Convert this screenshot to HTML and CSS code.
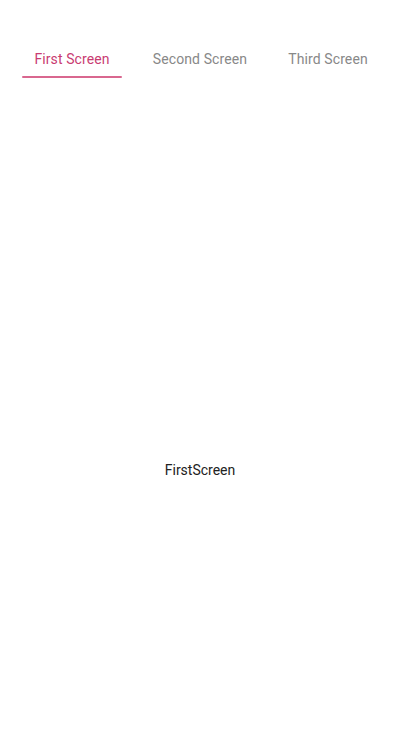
FILE: index.html
```html
<!DOCTYPE html>
<html>
<head>
<meta charset="utf-8">
<link rel="stylesheet" href="styles.css">
</head>
<body>
<div class="app">
  <div class="tabs">
    <div class="tab active"><span class="label">First Screen<span class="indicator"></span></span></div>
    <div class="tab"><span class="label">Second Screen</span></div>
    <div class="tab"><span class="label">Third Screen</span></div>
  </div>
  <div class="content">
    <div class="screen-text">FirstScreen</div>
  </div>
</div>
</body>
</html>
```
FILE: styles.css
```css
html, body {
  margin: 0;
  padding: 0;
  background: #ffffff;
}
.app {
  width: 400px;
  height: 750px;
  display: flex;
  flex-direction: column;
  font-family: Roboto, "Liberation Sans", sans-serif;
}
.tabs {
  display: flex;
  padding: 40px 8px 0 8px;
  height: 38px;
}
.tab {
  flex: 1;
  display: flex;
  justify-content: center;
}
.label {
  position: relative;
  display: flex;
  align-items: center;
  padding: 0 12px;
  height: 38px;
  font-size: 14px;
  color: #888888;
  letter-spacing: 0.1px;
}
.tab.active .label {
  color: #c93c72;
}
.indicator {
  position: absolute;
  left: 0;
  right: 0;
  bottom: 0;
  height: 2px;
  background: #d9678f;
  border-radius: 1px;
}
.content {
  flex: 1;
  display: flex;
  align-items: center;
  justify-content: center;
}
.screen-text {
  font-size: 14px;
  color: #222222;
  margin-top: 112px;
}
```
